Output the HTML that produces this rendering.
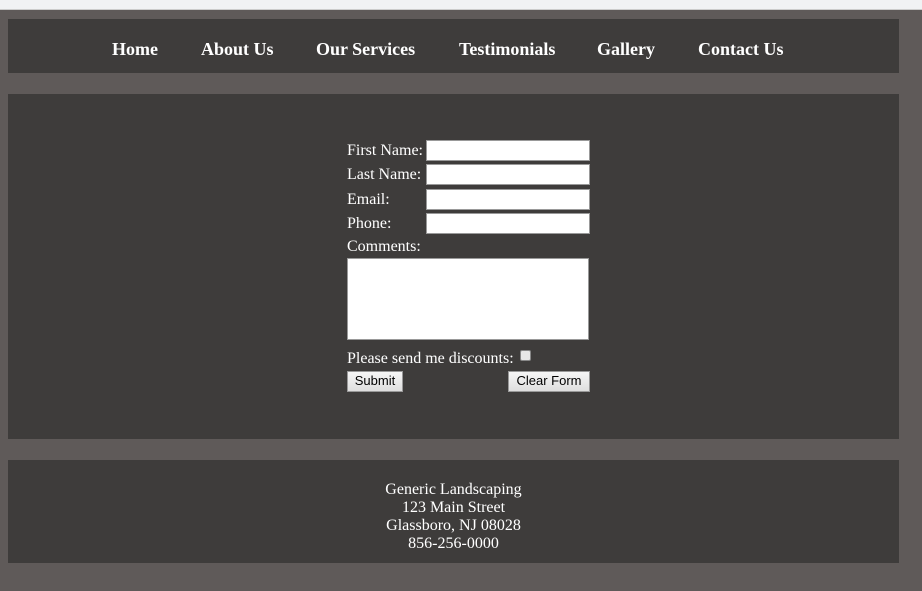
<!DOCTYPE html>
<html><head><meta charset="utf-8"><style>
*{margin:0;padding:0;box-sizing:border-box}
body{width:922px;height:591px;background:#5f5a59;position:relative;overflow:hidden;font-family:"Liberation Serif",serif;color:#fff}
.top{position:absolute;left:0;top:0;width:922px;height:10px;background:#f1f2f4;border-bottom:1px solid #ccc}
.box{position:absolute;left:8px;width:891px;background:#3e3c3b}
.nav a{position:absolute;top:39px;font-weight:bold;font-size:18px;color:#fff;text-decoration:none}
.lbl{position:absolute;left:347px;font-size:16px}
.in{position:absolute;left:426px;width:164px;height:21px;background:#fff;border:1px solid #999}
.btn{position:absolute;top:371px;height:21px;background:linear-gradient(#f6f6f6,#dedede);border:1px solid #999;color:#000;font-family:"Liberation Sans",sans-serif;font-size:13px;text-align:center;line-height:18px}
.foot{position:absolute;left:0;width:907px;text-align:center;font-size:16px;line-height:18px}
</style></head><body>
<div class="top"></div>
<div class="box nav" style="top:19px;height:54px"></div>
<div class="nav">
<a style="left:112px">Home</a>
<a style="left:201px">About Us</a>
<a style="left:316px">Our Services</a>
<a style="left:459px">Testimonials</a>
<a style="left:597px">Gallery</a>
<a style="left:698px">Contact Us</a>
</div>
<div class="box" style="top:94px;height:345px"></div>
<div class="lbl" style="top:142px">First Name:</div><div class="in" style="top:140px"></div>
<div class="lbl" style="top:166px">Last Name:</div><div class="in" style="top:164px"></div>
<div class="lbl" style="top:191px">Email:</div><div class="in" style="top:189px"></div>
<div class="lbl" style="top:215px">Phone:</div><div class="in" style="top:213px"></div>
<div class="lbl" style="top:238px">Comments:</div>
<div style="position:absolute;left:347px;top:258px;width:242px;height:82px;background:#fff;border:1px solid #999"></div>
<div class="lbl" style="top:350px">Please send me discounts:</div>
<div style="position:absolute;left:520px;top:350px;width:11px;height:11px;background:#e8e8e8;border:1px solid #888;border-radius:2px"></div>
<div class="btn" style="left:347px;width:56px">Submit</div>
<div class="btn" style="left:508px;width:82px">Clear Form</div>
<div class="box" style="top:460px;height:103px"></div>
<div class="foot" style="top:481px">Generic Landscaping<br>123 Main Street<br>Glassboro, NJ 08028<br>856-256-0000</div>
</body></html>
